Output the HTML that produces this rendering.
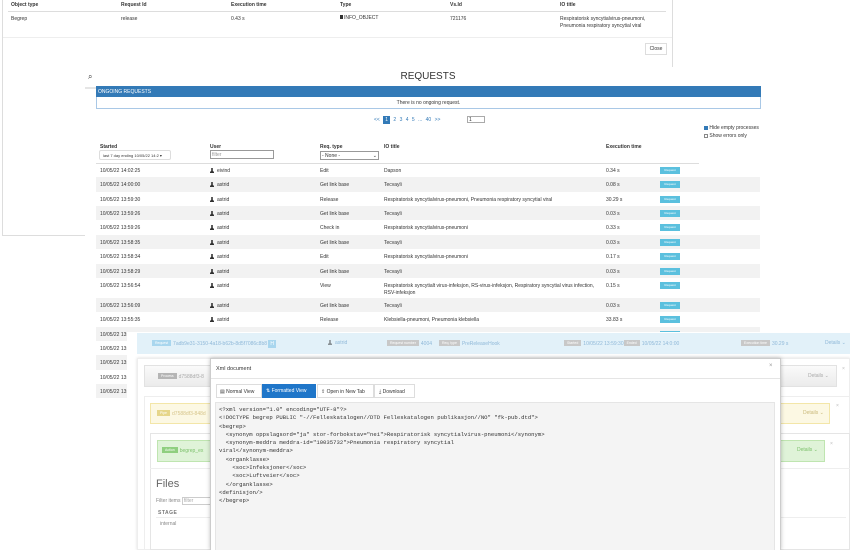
<!DOCTYPE html>
<html><head><meta charset="utf-8"><style>
*{margin:0;padding:0;box-sizing:border-box}
body{width:850px;height:550px;overflow:hidden;background:#fff;font-family:"Liberation Sans",sans-serif;color:#333;position:relative;font-size:5px}
.a{position:absolute;white-space:nowrap}
.b{font-weight:bold}
.row{position:absolute;left:96px;width:664px}
.g{background:#f2f2f2}
.btn{position:absolute;left:564px;width:20px;height:7px;background:#5bc0de;color:#fff;font-size:3px;text-align:center;line-height:7px;top:4px}
.u::before{content:"";display:inline-block;width:4px;height:5px;background:#333;margin-right:3px;vertical-align:-1px;clip-path:polygon(30% 0,70% 0,70% 55%,100% 80%,100% 100%,0 100%,0 80%,30% 55%)}
.lbl{display:inline-block;background:#c8c8c8;color:#fff;font-size:3.5px;padding:1px 3px;margin-right:2px;vertical-align:1px}
pre.a{font-family:"Liberation Mono",monospace;font-size:5.6px;line-height:8.3px;color:#333;white-space:pre}
</style></head><body>

<div class="a" style="left:2px;top:0;width:671px;height:236px;border:1px solid #ddd;border-top:none;background:#fff"></div>
<div class="a b" style="left:11px;top:2px">Object type</div>
<div class="a b" style="left:121px;top:2px">Request Id</div>
<div class="a b" style="left:231px;top:2px">Execution time</div>
<div class="a b" style="left:340px;top:2px">Type</div>
<div class="a b" style="left:450px;top:2px">Vs.Id</div>
<div class="a b" style="left:560px;top:2px">IO title</div>
<div class="a" style="left:8px;top:11px;width:658px;border-top:1px solid #ddd"></div>
<div class="a" style="left:11px;top:16px">Begrep</div>
<div class="a" style="left:121px;top:16px">release</div>
<div class="a" style="left:231px;top:16px">0.43 s</div>
<div class="a" style="left:340px;top:15px"><span style="display:inline-block;width:3px;height:4px;background:#333;margin-right:1px"></span>INFO_OBJECT</div>
<div class="a" style="left:450px;top:16px">721176</div>
<div class="a" style="left:560px;top:16px;line-height:7px">Respiratorisk syncytialvirus-pneumoni,<br>Pneumonia respiratory syncytial viral</div>
<div class="a" style="left:3px;top:37px;width:669px;border-top:1px solid #eee"></div>
<div class="a" style="left:645px;top:43px;width:22px;height:12px;border:1px solid #ddd;text-align:center;line-height:10px">Close</div>

<div class="a" style="left:85px;top:67px;width:765px;height:483px;background:#fff"></div>
<div class="a" style="left:85px;top:67px;width:11px;height:22px;border-bottom:2px solid #e5e5e5"></div>
<div class="a" style="left:88px;top:72px;font-size:8px">&#x2315;</div>
<div class="a" style="left:96px;top:71px;width:664px;text-align:center;font-size:10px;color:#333">REQUESTS</div>
<div class="a" style="left:96px;top:86px;width:665px;height:23px;border:1px solid #a9c8e6"></div>
<div class="a" style="left:96px;top:86px;width:665px;height:11px;background:#337ab7;color:#fff;padding:3px 2px">ONGOING REQUESTS</div>
<div class="a" style="left:96px;top:100px;width:665px;text-align:center">There is no ongoing request.</div>
<div class="a" style="left:374px;top:117px;color:#337ab7;word-spacing:2px">&lt;&lt; <span style="background:#337ab7;color:#fff;padding:1px 2px">1</span> 2 3 4 5 ... 40 &gt;&gt;</div>
<div class="a" style="left:467px;top:116px;width:18px;height:7px;border:1px solid #aaa;padding-left:1px;line-height:6px">1</div>
<div class="a" style="left:704px;top:125px"><span style="display:inline-block;width:4px;height:4px;background:#337ab7;vertical-align:-1px"></span> Hide empty processes</div>
<div class="a" style="left:704px;top:133px"><span style="display:inline-block;width:4px;height:4px;border:1px solid #888;vertical-align:-1px"></span> Show errors only</div>
<div class="a b" style="left:100px;top:144px">Started</div>
<div class="a b" style="left:210px;top:144px">User</div>
<div class="a b" style="left:320px;top:144px">Req. type</div>
<div class="a b" style="left:384px;top:144px">IO title</div>
<div class="a b" style="left:606px;top:144px">Execution time</div>
<div class="a" style="left:99px;top:150px;width:72px;height:10px;border:1px solid #ddd;border-radius:2px;font-size:4px;padding:2px 3px">last 7 day ending 10/05/22 14:2 ▾</div>
<div class="a" style="left:210px;top:150px;width:64px;height:9px;border:1px solid #999;color:#999;padding:1px 1px">filter</div>
<div class="a" style="left:320px;top:151px;width:59px;height:9px;border:1px solid #999;padding:1px 1px">- None -<span style="float:right">⌄</span></div>
<div class="a" style="left:96px;top:163px;width:603px;border-top:1px solid #ddd"></div>

<div class="row" style="top:163px;height:14px"><span class="a" style="left:4px;top:5px">10/05/22 14:02:25</span><span class="a u" style="left:114px;top:5px">eivind</span><span class="a" style="left:224px;top:5px">Edit</span><span class="a" style="left:288px;top:5px">Dapson</span><span class="a" style="left:510px;top:5px">0.34 s</span><span class="btn">Request</span></div>
<div class="row g" style="top:177px;height:15px"><span class="a" style="left:4px;top:5px">10/05/22 14:00:00</span><span class="a u" style="left:114px;top:5px">astrid</span><span class="a" style="left:224px;top:5px">Get link base</span><span class="a" style="left:288px;top:5px">Tecvayli</span><span class="a" style="left:510px;top:5px">0.08 s</span><span class="btn">Request</span></div>
<div class="row" style="top:192px;height:14px"><span class="a" style="left:4px;top:5px">10/05/22 13:59:30</span><span class="a u" style="left:114px;top:5px">astrid</span><span class="a" style="left:224px;top:5px">Release</span><span class="a" style="left:288px;top:5px">Respiratorisk syncytialvirus-pneumoni, Pneumonia respiratory syncytial viral</span><span class="a" style="left:510px;top:5px">30.29 s</span><span class="btn">Request</span></div>
<div class="row g" style="top:206px;height:14px"><span class="a" style="left:4px;top:5px">10/05/22 13:59:26</span><span class="a u" style="left:114px;top:5px">astrid</span><span class="a" style="left:224px;top:5px">Get link base</span><span class="a" style="left:288px;top:5px">Tecvayli</span><span class="a" style="left:510px;top:5px">0.03 s</span><span class="btn">Request</span></div>
<div class="row" style="top:220px;height:15px"><span class="a" style="left:4px;top:5px">10/05/22 13:59:26</span><span class="a u" style="left:114px;top:5px">astrid</span><span class="a" style="left:224px;top:5px">Check in</span><span class="a" style="left:288px;top:5px">Respiratorisk syncytialvirus-pneumoni</span><span class="a" style="left:510px;top:5px">0.33 s</span><span class="btn">Request</span></div>
<div class="row g" style="top:235px;height:14px"><span class="a" style="left:4px;top:5px">10/05/22 13:58:35</span><span class="a u" style="left:114px;top:5px">astrid</span><span class="a" style="left:224px;top:5px">Get link base</span><span class="a" style="left:288px;top:5px">Tecvayli</span><span class="a" style="left:510px;top:5px">0.03 s</span><span class="btn">Request</span></div>
<div class="row" style="top:249px;height:15px"><span class="a" style="left:4px;top:5px">10/05/22 13:58:34</span><span class="a u" style="left:114px;top:5px">astrid</span><span class="a" style="left:224px;top:5px">Edit</span><span class="a" style="left:288px;top:5px">Respiratorisk syncytialvirus-pneumoni</span><span class="a" style="left:510px;top:5px">0.17 s</span><span class="btn">Request</span></div>
<div class="row g" style="top:264px;height:14px"><span class="a" style="left:4px;top:5px">10/05/22 13:58:29</span><span class="a u" style="left:114px;top:5px">astrid</span><span class="a" style="left:224px;top:5px">Get link base</span><span class="a" style="left:288px;top:5px">Tecvayli</span><span class="a" style="left:510px;top:5px">0.03 s</span><span class="btn">Request</span></div>
<div class="row" style="top:278px;height:20px"><span class="a" style="left:4px;top:5px">10/05/22 13:56:54</span><span class="a u" style="left:114px;top:5px">astrid</span><span class="a" style="left:224px;top:5px">View</span><span class="a" style="left:288px;top:5px;line-height:7px">Respiratorisk syncytialt virus-infeksjon, RS-virus-infeksjon, Respiratory syncytial virus infection,<br>RSV-infeksjon</span><span class="a" style="left:510px;top:5px">0.15 s</span><span class="btn">Request</span></div>
<div class="row g" style="top:298px;height:14px"><span class="a" style="left:4px;top:5px">10/05/22 13:56:09</span><span class="a u" style="left:114px;top:5px">astrid</span><span class="a" style="left:224px;top:5px">Get link base</span><span class="a" style="left:288px;top:5px">Tecvayli</span><span class="a" style="left:510px;top:5px">0.03 s</span><span class="btn">Request</span></div>
<div class="row" style="top:312px;height:15px"><span class="a" style="left:4px;top:5px">10/05/22 13:55:35</span><span class="a u" style="left:114px;top:5px">astrid</span><span class="a" style="left:224px;top:5px">Release</span><span class="a" style="left:288px;top:5px">Klebsiella-pneumoni, Pneumonia klebsiella</span><span class="a" style="left:510px;top:5px">33.83 s</span><span class="btn">Request</span></div>
<div class="row g" style="top:327px;height:14px"><span class="a" style="left:4px;top:5px">10/05/22 13:</span><span class="btn">Request</span></div>
<div class="row" style="top:341px;height:14px"><span class="a" style="left:4px;top:5px">10/05/22 13:</span></div>
<div class="row g" style="top:355px;height:15px;width:32px"><span class="a" style="left:4px;top:5px">10/05/22 13:</span></div>
<div class="row" style="top:370px;height:14px"><span class="a" style="left:4px;top:5px">10/05/22 13:</span></div>
<div class="row g" style="top:384px;height:14px;width:32px"><span class="a" style="left:4px;top:5px">10/05/22 13:</span></div>

<div class="a" style="left:127px;top:332px;width:723px;height:218px;background:#fff"></div>
<div class="a" style="left:137px;top:333px;width:713px;height:21px;background:#e2f1f9;color:#7ab0d6"></div>
<div class="a" style="left:152px;top:340px;color:#8fb8d8"><span class="lbl" style="background:#a9d6ee">Request</span>7adb9e31-3150-4a18-b62b-8d5f7086c8b8 <span style="background:#a9d6ee;color:#fff;padding:1px 2px">H</span></div>
<div class="a" style="left:328px;top:340px;color:#8fb8d8"><span class="u" style="opacity:.5"></span>astrid</div>
<div class="a" style="left:387px;top:340px;color:#8fb8d8"><span class="lbl">Request number</span>4004 &nbsp;&nbsp;&nbsp;&nbsp;<span class="lbl">Req. type</span>PreReleaseHook</div>
<div class="a" style="left:564px;top:340px;color:#8fb8d8"><span class="lbl">Started</span>10/05/22 13:59:30<span class="lbl">Ended</span>10/05/22 14:0:00</div>
<div class="a" style="left:741px;top:340px;color:#8fb8d8"><span class="lbl">Execution time</span>30.29 s</div>
<div class="a" style="left:825px;top:340px;color:#8fb8d8">Details ⌄</div>

<div class="a" style="left:137px;top:358px;width:713px;height:192px;border:1px solid #eee;box-shadow:0 0 3px #ddd"></div>
<div class="a" style="left:144px;top:365px;width:693px;height:22px;background:linear-gradient(#fafafa,#ebebeb);border:1px solid #e2e2e2"></div>
<div class="a" style="left:158px;top:373px;color:#aaa"><span class="lbl" style="background:#b5b5b5">Process</span>d7588df3-8</div>
<div class="a" style="left:808px;top:373px;color:#aaa">Details ⌄</div>
<div class="a" style="left:842px;top:366px;color:#bbb">×</div>
<div class="a" style="left:144px;top:396px;width:706px;height:154px;border:1px solid #eee"></div>
<div class="a" style="left:150px;top:403px;width:680px;height:21px;background:#fcf8e3;border:1px solid #f3e6a8"></div>
<div class="a" style="left:157px;top:410px;color:#d6c48a"><span class="lbl" style="background:#e6d68a">Pipe</span>d7588df3-848d</div>
<div class="a" style="left:803px;top:410px;color:#c9b97a">Details ⌄</div>
<div class="a" style="left:836px;top:403px;color:#bbb">×</div>
<div class="a" style="left:150px;top:433px;width:700px;height:117px;border:1px solid #e5e5e5"></div>
<div class="a" style="left:157px;top:440px;width:668px;height:22px;background:#dff3d8;border:1px solid #bfe5b0"></div>
<div class="a" style="left:162px;top:447px;color:#7bc06a"><span class="lbl" style="background:#8fcf7f">Action</span>begrep_ex</div>
<div class="a" style="left:797px;top:447px;color:#7bc06a">Details ⌄</div>
<div class="a" style="left:830px;top:441px;color:#bbb">×</div>
<div class="a" style="left:150px;top:468px;width:700px;border-top:1px solid #eee"></div>
<div class="a" style="left:156px;top:478px;font-size:11px;color:#666">Files</div>
<div class="a" style="left:156px;top:497px;color:#888">Filter items <span style="display:inline-block;width:30px;height:8px;border:1px solid #ccc;padding-left:1px;color:#aaa">filter</span></div>
<div class="a b" style="left:158px;top:510px;color:#777;letter-spacing:.5px">STAGE</div>
<div class="a" style="left:156px;top:517px;width:690px;border-top:1px solid #eee"></div>
<div class="a" style="left:160px;top:521px;color:#888">internal</div>

<div class="a" style="left:210px;top:358px;width:571px;height:192px;background:#fff;border:1px solid #ccc;border-bottom:none;box-shadow:0 0 4px rgba(0,0,0,.25)"></div>
<div class="a" style="left:216px;top:366px;font-size:5.5px">Xml document</div>
<div class="a" style="left:769px;top:363px;color:#999;font-size:6px">×</div>
<div class="a" style="left:211px;top:378px;width:569px;border-top:1px solid #e5e5e5"></div>
<div class="a" style="left:216px;top:384px;width:46px;height:14px;border:1px solid #ddd;padding:4px 3px;font-size:5px">▤ Normal View</div>
<div class="a" style="left:262px;top:384px;width:54px;height:14px;background:#1f76c9;color:#fff;padding:4px 4px;font-size:5px">⇅ Formatted View</div>
<div class="a" style="left:317px;top:384px;width:57px;height:14px;border:1px solid #ddd;padding:4px 3px;font-size:5px">⇪ Open in New Tab</div>
<div class="a" style="left:374px;top:384px;width:41px;height:14px;border:1px solid #ddd;padding:4px 4px;font-size:5px">⤓ Download</div>
<div class="a" style="left:215px;top:402px;width:560px;height:148px;background:#f4f4f4;border:1px solid #e5e5e5;border-bottom:none"></div>
<pre class="a" style="left:219px;top:406px">&lt;?xml version="1.0" encoding="UTF-8"?&gt;
&lt;!DOCTYPE begrep PUBLIC "-//Felleskatalogen//DTD Felleskatalogen publikasjon//NO" "fk-pub.dtd"&gt;
&lt;begrep&gt;
  &lt;synonym oppslagsord="ja" stor-forbokstav="nei"&gt;Respiratorisk syncytialvirus-pneumoni&lt;/synonym&gt;
  &lt;synonym-meddra meddra-id="10035732"&gt;Pneumonia respiratory syncytial
viral&lt;/synonym-meddra&gt;
  &lt;organklasse&gt;
    &lt;soc&gt;Infeksjoner&lt;/soc&gt;
    &lt;soc&gt;Luftveier&lt;/soc&gt;
  &lt;/organklasse&gt;
&lt;definisjon/&gt;
&lt;/begrep&gt;</pre>
</body></html>
